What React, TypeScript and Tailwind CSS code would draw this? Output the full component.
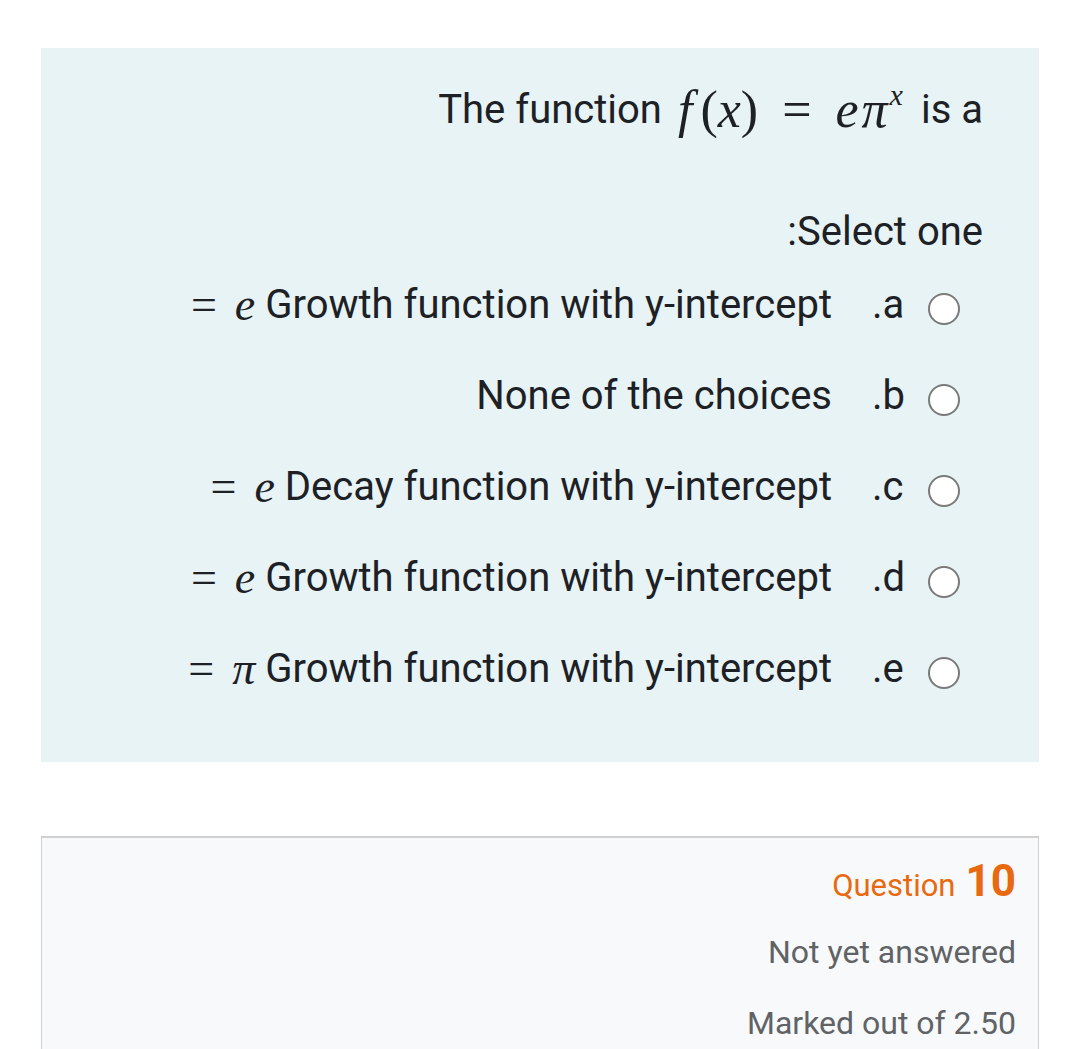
import React from 'react';

const serif = { fontFamily: '"Liberation Serif", "DejaVu Serif", serif' };

type Opt = { letter: string; sym?: string; text: string };

const options: Opt[] = [
    { letter: 'a', sym: 'e', text: 'Growth function with y-intercept' },
    { letter: 'b', text: 'None of the choices' },
    { letter: 'c', sym: 'e', text: 'Decay function with y-intercept' },
    { letter: 'd', sym: 'e', text: 'Growth function with y-intercept' },
    { letter: 'e', sym: 'π', text: 'Growth function with y-intercept' },
];

function MathEq({ sym }: { sym: string }) {
    return (
        <span style={serif} className="mr-[10px] text-[46px]">
            <span className="not-italic">=</span>
            <span className="ml-[18px] italic">{sym}</span>
        </span>
    );
}

function OptionRow({ opt }: { opt: Opt }) {
    return (
        <div className="flex h-[91px] items-center justify-end">
            {opt.sym && <MathEq sym={opt.sym} />}
            <span>{opt.text}</span>
            <span className="ml-[40px] w-[36px]">.{opt.letter}</span>
            <span className="ml-[20px] mt-[8px] h-[32px] w-[32px] shrink-0 rounded-full border-2 border-[#7a7a7a] bg-white" />
        </div>
    );
}

export default function App() {
    return (
        <div className="h-screen overflow-hidden bg-white pt-[48px] text-[#1d2125]" style={{ fontFamily: 'Roboto, "Liberation Sans", sans-serif' }}>
            <div className="mx-[41px] bg-[#e7f3f5] pb-[48px] pl-[40px] pr-[56px] pt-[40px] text-[40px]">
                <div className="flex h-[44px] items-center justify-end leading-[44px]">
                    <span>The function</span>
                    <span style={serif} className="ml-[16px] text-[52px]">
                        <span className="mr-[8px] italic">f</span>
                        <span>(</span>
                        <span className="italic">x</span>
                        <span>)</span>
                        <span className="mx-[24px]">=</span>
                        <span className="italic">e</span>
                        <span className="ml-[3px] italic">π</span>
                        <sup className="relative top-[-22px] ml-[2px] text-[30px] italic">x</sup>
                    </span>
                    <span className="ml-[18px]">is a</span>
                </div>
                <div className="mt-[78px] flex h-[44px] items-center justify-end leading-[44px]">:Select one</div>
                <div className="mt-[5px] pr-[23px]">
                    {options.map(o => (
                        <OptionRow key={o.letter} opt={o} />
                    ))}
                </div>
            </div>

            <div className="mx-[41px] mt-[74px] h-[260px] border border-t-2 border-[#cfcfcf] bg-[#f8f9fa] pr-[22px] pt-[10px]">
                <div className="flex items-baseline justify-end text-[#e8690f]">
                    <span className="text-[31px]">Question</span>
                    <span className="ml-[10px] text-[44px] font-bold">10</span>
                </div>
                <div className="mt-[16px] text-right text-[32px] leading-[44px] text-[#606366]">Not yet answered</div>
                <div className="mt-[27px] text-right text-[32px] leading-[44px] text-[#606366]">Marked out of 2.50</div>
            </div>
        </div>
    );
}
